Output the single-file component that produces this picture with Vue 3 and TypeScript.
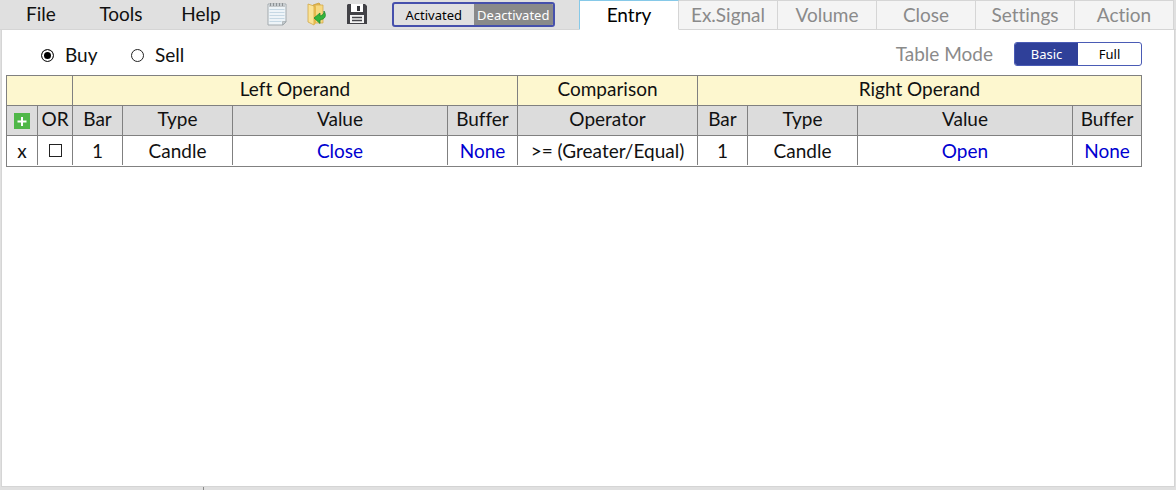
<script setup lang="ts">
import { ref } from 'vue'

const menus = ['File', 'Tools', 'Help']
const tabs = ['Entry', 'Ex.Signal', 'Volume', 'Close', 'Settings', 'Action']
const activeTab = ref('Entry')
const activated = ref(false)
const side = ref('buy')
const mode = ref('Basic')

interface Operand { bar: number; type: string; value: string; buffer: string }
interface Rule { id: number; or: boolean; left: Operand; operator: string; right: Operand }

const rules = ref<Rule[]>([
  {
    id: 1,
    or: false,
    left: { bar: 1, type: 'Candle', value: 'Close', buffer: 'None' },
    operator: '>= (Greater/Equal)',
    right: { bar: 1, type: 'Candle', value: 'Open', buffer: 'None' },
  },
])

function addRule() {
  rules.value.push({
    id: Date.now(),
    or: false,
    left: { bar: 1, type: 'Candle', value: 'Close', buffer: 'None' },
    operator: '>= (Greater/Equal)',
    right: { bar: 1, type: 'Candle', value: 'Open', buffer: 'None' },
  })
}

function removeRule(id: number) {
  rules.value = rules.value.filter((r) => r.id !== id)
}
</script>

<template>
  <div class="app">
    <header class="topbar">
      <nav class="menus">
        <button v-for="m in menus" :key="m" type="button" class="menu">{{ m }}</button>
      </nav>
      <div class="tools">
        <button type="button" class="tool" aria-label="New">
          <svg viewBox="0 0 20 24" width="20" height="24">
            <path d="M1 2h18v18l-3 3H1z" fill="#eef4f8" stroke="#a3aaae" />
            <path d="M19 19.500h-3.500V23z" fill="#c4cbd0" stroke="#9aa1a5" stroke-width=".6" />
            <path d="M2.500 7.500h15M2.500 10.500h15M2.500 13.500h15M2.500 16.500h15M2.500 19.500h12" stroke="#c6d8e4" />
            <path d="M2 3h16v2H2z" fill="#c5c9cb" />
            <path d="M3.500 1v3M6.500 1v3M9.500 1v3M12.500 1v3M15.500 1v3" stroke="#8d9295" />
          </svg>
        </button>
        <button type="button" class="tool" aria-label="Open">
          <svg viewBox="0 0 20 24" width="20" height="24">
            <path d="M6 3l6-2 1 1v17H6z" fill="#e9bd50" stroke="#c69832" stroke-width=".7" />
            <path d="M8 3h8v18H8z" fill="#f7d981" stroke="#d0a544" stroke-width=".7" />
            <path d="M1 2l6 2v19l-6-3z" fill="#fbe397" stroke="#d2a848" stroke-width=".8" />
            <path d="M7 5l2-1v17l-2 2z" fill="#e6b84b" />
            <path d="M17 9c3 5 1 8-4 9v3.500l-6-5.500 6-5v3c3-1 4-2 4-5z" fill="#35b43b" stroke="#16852a" stroke-width=".7" />
          </svg>
        </button>
        <button type="button" class="tool" aria-label="Save">
          <svg viewBox="0 0 20 24" width="20" height="24">
            <path d="M1 2h17l2 2v18H0V3z" fill="#424247" />
            <path d="M4 2h12v8H4z" fill="#fff" />
            <path d="M10 4h3v5h-3z" fill="#35353a" />
            <path d="M3 13h14v8H3z" fill="#f4f4f4" />
            <path d="M5 15.500h10M5 18.500h10" stroke="#45454a" stroke-width="1.300" />
          </svg>
        </button>
      </div>
      <div class="switch power">
        <button type="button" :aria-pressed="activated" @click="activated = true">Activated</button>
        <button type="button" :aria-pressed="!activated" @click="activated = false">Deactivated</button>
      </div>
      <nav class="tabs" role="tablist">
        <button
          v-for="t in tabs"
          :key="t"
          type="button"
          role="tab"
          class="tab"
          :class="{ active: t === activeTab }"
          :aria-selected="t === activeTab"
          @click="activeTab = t"
        >{{ t }}</button>
      </nav>
    </header>

    <main class="panel">
      <div class="options">
        <label class="radio"><input v-model="side" type="radio" name="side" value="buy" />Buy</label>
        <label class="radio"><input v-model="side" type="radio" name="side" value="sell" />Sell</label>
        <div class="mode-group">
          <span id="mode-label">Table Mode</span>
          <div class="switch mode" role="group" aria-labelledby="mode-label">
            <button v-for="m in ['Basic', 'Full']" :key="m" type="button" :aria-pressed="mode === m" @click="mode = m">{{ m }}</button>
          </div>
        </div>
      </div>

      <table class="rules">
        <colgroup>
          <col class="c-add" /><col class="c-or" />
          <col class="c-bar" /><col class="c-type" /><col /><col class="c-buffer" />
          <col class="c-op" />
          <col class="c-bar" /><col class="c-type" /><col /><col class="c-last" />
        </colgroup>
        <thead>
          <tr class="groups">
            <th colspan="2"></th>
            <th colspan="4">Left Operand</th>
            <th>Comparison</th>
            <th colspan="4">Right Operand</th>
          </tr>
          <tr class="columns">
            <th>
              <button type="button" class="add" aria-label="Add row" @click="addRule">
                <svg viewBox="0 0 16 16" width="16" height="16">
                  <path d="M0 0h16v16H0z" fill="#4fb748" />
                  <path d="M8 4v9M3.500 8.500h9" stroke="#fff" stroke-width="2" />
                </svg>
              </button>
            </th>
            <th>OR</th>
            <th>Bar</th><th>Type</th><th>Value</th><th>Buffer</th>
            <th>Operator</th>
            <th>Bar</th><th>Type</th><th>Value</th><th>Buffer</th>
          </tr>
        </thead>
        <tbody>
          <tr v-for="r in rules" :key="r.id">
            <td><div class="cell"><button type="button" class="remove" aria-label="Remove row" @click="removeRule(r.id)">x</button></div></td>
            <td><div class="cell"><input v-model="r.or" type="checkbox" class="check" aria-label="OR" /></div></td>
            <td><div class="cell">{{ r.left.bar }}</div></td>
            <td><div class="cell">{{ r.left.type }}</div></td>
            <td><div class="cell link">{{ r.left.value }}</div></td>
            <td><div class="cell link">{{ r.left.buffer }}</div></td>
            <td><div class="cell">{{ r.operator }}</div></td>
            <td><div class="cell">{{ r.right.bar }}</div></td>
            <td><div class="cell">{{ r.right.type }}</div></td>
            <td><div class="cell link">{{ r.right.value }}</div></td>
            <td><div class="cell link">{{ r.right.buffer }}</div></td>
          </tr>
        </tbody>
      </table>
    </main>
    <footer class="status"><span class="status-cell"></span></footer>
  </div>
</template>

<style>
body {
  margin: 0;
}
</style>

<style scoped>
.app {
  display: flex;
  flex-direction: column;
  min-height: 100vh;
  background: #e0e0e0;
  color: #111;
  font: 19px/24px Lato, Carlito, Calibri, sans-serif;
  font-variant-ligatures: none;
}
button {
  margin: 0;
  padding: 0;
  border: 0;
  background: none;
  color: inherit;
  font: inherit;
  font-variant-ligatures: none;
  cursor: pointer;
}
svg {
  display: block;
}
.topbar {
  display: flex;
  height: 30px;
  padding: 0 2px 0 1px;
  box-shadow: inset 0 -1px #d5d5d5;
}
.menus {
  display: flex;
  align-items: center;
}
.menu {
  width: 80px;
  height: 30px;
  padding-bottom: 2px;
}
.tools {
  display: flex;
  align-items: center;
  gap: 20px;
  margin-left: 26px;
  padding-bottom: 2px;
}
.switch {
  display: flex;
  box-sizing: border-box;
  overflow: hidden;
  border: 1px solid #4a5bb5;
  border-radius: 3px;
  color: #000;
  font: 13px/20px "Noto Sans", Tahoma, sans-serif;
}
.switch button {
  flex: 1;
}
.power {
  flex: none;
  width: 163px;
  height: 25px;
  margin: 2px 24px 0 25px;
  border: 2px solid #4650ac;
}
.power button[aria-pressed="true"] {
  background: #8a8a8a;
  color: #fff;
}
.tabs {
  display: flex;
  flex: 1;
}
.tab {
  flex: 1;
  box-sizing: border-box;
  padding-bottom: 1px;
  border: 1px solid #d5d5d5;
  border-left-width: 0;
  background: #f4f4f4;
  color: #8a8a8a;
}
.tab.active {
  border-top-color: #86c9e8;
  border-left: 1px solid #86c9e8;
  border-bottom-color: #fff;
  background: #fff;
  color: #000;
}
.panel {
  flex: 1;
  margin: 0 1px;
  padding: 9px 32px 0 4px;
  border: 1px solid #d5d5d5;
  border-top: 0;
  background: #fff;
}
.options {
  display: flex;
  align-items: center;
  height: 32px;
  margin-bottom: 4px;
}
.radio {
  display: flex;
  align-items: center;
  gap: 11px;
  width: 90px;
}
.radio:first-child {
  margin-left: 35px;
}
.radio input {
  appearance: none;
  box-sizing: border-box;
  width: 13px;
  height: 13px;
  margin: 0;
  border: 1px solid #222;
  border-radius: 50%;
  background: #fff;
}
.radio input:checked {
  background: #000;
  box-shadow: inset 0 0 0 2px #fff;
}
.mode-group {
  display: flex;
  align-items: center;
  gap: 21px;
  margin-left: auto;
  padding-bottom: 2px;
  color: #8a8a8a;
}
.mode {
  width: 128px;
  height: 24px;
}
.mode button[aria-pressed="true"] {
  background: #2f4099;
  color: #fff;
}
.rules {
  width: 100%;
  table-layout: fixed;
  border-spacing: 0;
  border: solid #808080;
  border-width: 1px 0 0 1px;
  text-align: center;
}
.c-add { width: 31px; }
.c-or { width: 35px; }
.c-bar { width: 50px; }
.c-type { width: 110px; }
.c-buffer { width: 70px; }
.c-op { width: 180px; }
.c-last { width: 69px; }
th,
td {
  padding: 0;
  border-bottom: 1px solid #808080;
  font-weight: 400;
  white-space: nowrap;
}
th {
  box-sizing: border-box;
  height: 30px;
  padding-bottom: 3px;
  border-right: 1px solid #808080;
}
td:last-child {
  border-right: 1px solid #808080;
}
.groups {
  background: #fdf7cf;
}
.columns {
  background: #dcdcdc;
}
.columns th:first-child {
  padding-bottom: 0;
}
.cell {
  display: flex;
  align-items: center;
  justify-content: center;
  height: 29px;
  margin-bottom: 1px;
  border-right: 1px solid #808080;
}
td:last-child .cell {
  border-right: 0;
}
.link {
  color: #0000d0;
}
.add {
  display: block;
  margin: 0 auto;
}
.remove {
  width: 24px;
}
.check {
  appearance: none;
  box-sizing: border-box;
  width: 13px;
  height: 13px;
  margin: 0;
  border: 1px solid #222;
  background: #fff;
}
.check:checked {
  background: #222;
  box-shadow: inset 0 0 0 2px #fff;
}
.status {
  display: flex;
  height: 3px;
}
.status-cell {
  width: 203px;
  border-right: 1px solid #8a8a8a;
}
</style>
